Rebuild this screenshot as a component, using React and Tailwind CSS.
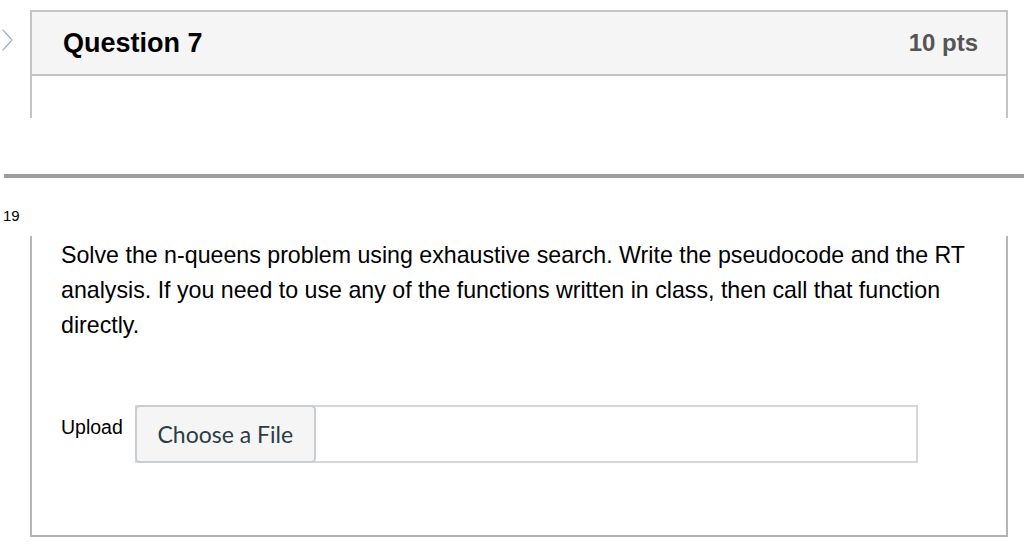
import React from "react";

function Chevron() {
  return (
    <svg width={16} height={24} viewBox="0 0 16 24" fill="none" stroke="#a3afbb" strokeWidth={1.2}>
      <path d="M3 2l9 10-9 10" strokeLinecap="round" strokeLinejoin="round" />
    </svg>
  );
}

export default function App() {
  return (
    <div className="w-[1024px] h-[556px] bg-white overflow-hidden font-['Liberation_Sans',Arial,sans-serif] text-black">
      {/* previous question, cut off */}
      <div className="flex pt-[10px]">
        <div className="w-[30px] flex-shrink-0 pt-[18px]">
          <Chevron />
        </div>
        <div className="w-[978px]">
          <div className="h-[66px] bg-[#f5f5f5] border-2 border-[#c4c4c4] flex items-center justify-between pl-[31px] pr-[28px]">
            <span className="text-[27px] font-bold">Question 7</span>
            <span className="text-[24px] font-bold text-[#555]">10 pts</span>
          </div>
          <div className="h-[42px] border-x-2 border-[#c4c4c4]" />
        </div>
      </div>

      <div className="ml-[4px] mt-[56px] h-[4px] bg-[#9e9e9e]" />

      <div className="pl-[3px] pt-[30px] text-[15px] leading-[16px] h-[58px]">19</div>

      {/* question card */}
      <div className="ml-[30px] w-[978px] h-[301px] border-x-2 border-b-2 border-[#b5b5b5] pl-[29px] pt-[2px]">
        <p className="text-[23.2px] leading-[35px] pr-[30px]">
          Solve the n-queens problem using exhaustive search. Write the pseudocode and the RT analysis. If you need to use any of the functions written in class, then call that function directly.
        </p>
        <div className="mt-[62px] flex items-start">
          <span className="mt-[11px] text-[19.5px] leading-[22px]">Upload</span>
          <div className="ml-[12px] w-[783px] h-[58px] border-2 border-[#d7d7d7] flex">
            <div className="-m-[2px] w-[181px] h-[58px] bg-[#f5f5f5] border-2 border-[#c7cdd1] rounded-[5px] flex items-center justify-center font-['Lato',sans-serif] text-[23px] text-[#2d3b45]">
              Choose a File
            </div>
          </div>
        </div>
      </div>
    </div>
  );
}
